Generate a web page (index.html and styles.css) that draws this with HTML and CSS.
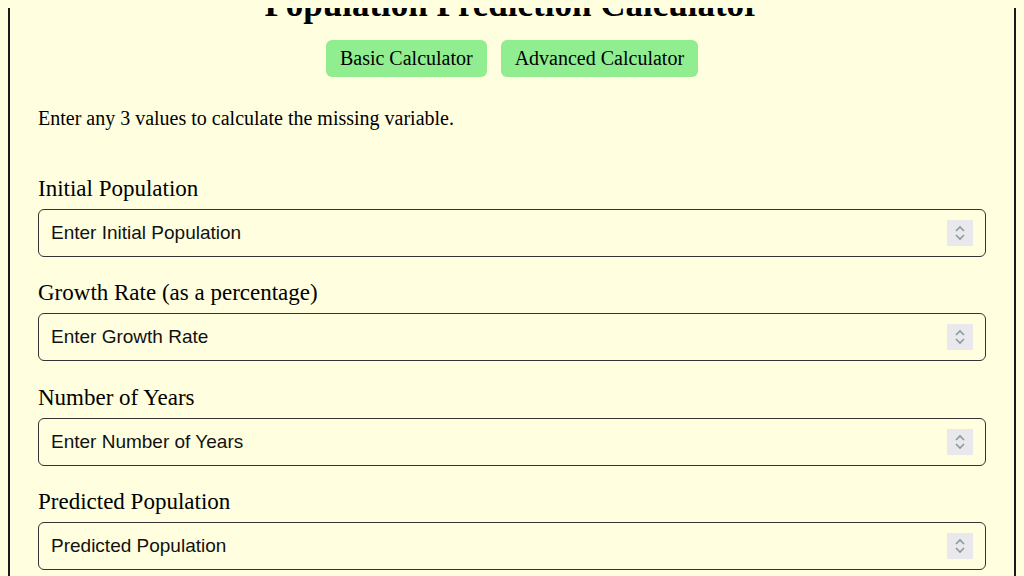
FILE: index.html
```html
<!DOCTYPE html>
<html lang="en">

<head>
    <meta charset="UTF-8">
    <meta name="viewport" content="width=device-width, initial-scale=1.0">
    <title>Population Prediction Calculator</title>
    <link rel="stylesheet" href="styles.css">
</head>

<body>

    <div id="calculator">
        <h1>Population Prediction Calculator</h1>

        <div class="mode-buttons">
            <button class="mode-btn">Basic Calculator</button>
            <button class="mode-btn">Advanced Calculator</button>
        </div>

        <p class="intro">Enter any 3 values to calculate the missing variable.</p>

        <!-- Inputs -->
        <div class="field">
            <label for="initial">Initial Population</label>
            <div class="input-wrap">
                <input type="number" id="initial" placeholder="Enter Initial Population">
                <span class="spinner"><svg width="26" height="26" viewBox="0 0 26 26"><path d="M9 11l4-4 4 4M9 15l4 4 4-4" fill="none" stroke="#8a9aa0" stroke-width="1.6"/></svg></span>
            </div>
        </div>

        <div class="field">
            <label for="rate">Growth Rate (as a percentage)</label>
            <div class="input-wrap">
                <input type="number" id="rate" placeholder="Enter Growth Rate">
                <span class="spinner"><svg width="26" height="26" viewBox="0 0 26 26"><path d="M9 11l4-4 4 4M9 15l4 4 4-4" fill="none" stroke="#8a9aa0" stroke-width="1.6"/></svg></span>
            </div>
        </div>

        <div class="field">
            <label for="years">Number of Years</label>
            <div class="input-wrap">
                <input type="number" id="years" placeholder="Enter Number of Years">
                <span class="spinner"><svg width="26" height="26" viewBox="0 0 26 26"><path d="M9 11l4-4 4 4M9 15l4 4 4-4" fill="none" stroke="#8a9aa0" stroke-width="1.6"/></svg></span>
            </div>
        </div>

        <div class="field">
            <label for="predicted">Predicted Population</label>
            <div class="input-wrap">
                <input type="number" id="predicted" placeholder="Predicted Population">
                <span class="spinner"><svg width="26" height="26" viewBox="0 0 26 26"><path d="M9 11l4-4 4 4M9 15l4 4 4-4" fill="none" stroke="#8a9aa0" stroke-width="1.6"/></svg></span>
            </div>
        </div>

    </div>

</body>

</html>
```

FILE: styles.css
```css
body {
    margin: 8px;
    background-color: lightyellow;
    font-family: "Liberation Serif", "Times New Roman", serif;
    color: #000;
}

#calculator {
    margin-top: -35px;
    padding: 10px 28px 20px;
    border: 2px solid #1a1a1a;
    background-color: lightyellow;
}

h1 {
    margin: 0 0 15px;
    font-size: 35px;
    line-height: 40px;
    text-align: center;
}

/* Mode switch */
.mode-buttons {
    display: flex;
    justify-content: center;
    gap: 14px;
}

.mode-btn {
    padding: 7px 14px;
    border: none;
    border-radius: 6px;
    background-color: lightgreen;
    font-family: "Liberation Serif", "Times New Roman", serif;
    font-size: 20px;
    line-height: 23px;
    color: #000;
}

.intro {
    margin: 30px 0 46px;
    font-size: 20px;
    line-height: 23px;
}

/* Form fields */
.field {
    margin-bottom: 23.3px;
}

.field label {
    display: block;
    margin-bottom: 7px;
    font-size: 23px;
    line-height: 26px;
}

.input-wrap {
    position: relative;
}

.input-wrap input {
    display: block;
    box-sizing: border-box;
    width: 100%;
    height: 48px;
    padding: 0 12px;
    border: 1px solid #333;
    border-radius: 6px;
    background-color: lightyellow;
    font-family: "Liberation Sans", Arial, sans-serif;
    font-size: 19px;
    color: #000;
    -moz-appearance: textfield;
}

.input-wrap input::placeholder {
    color: #111;
    opacity: 1;
}

.input-wrap input::-webkit-inner-spin-button,
.input-wrap input::-webkit-outer-spin-button {
    -webkit-appearance: none;
    margin: 0;
}

.spinner {
    position: absolute;
    top: 11px;
    right: 13px;
    width: 26px;
    height: 26px;
    background-color: #e9e9ed;
}

.spinner svg {
    display: block;
}
```
